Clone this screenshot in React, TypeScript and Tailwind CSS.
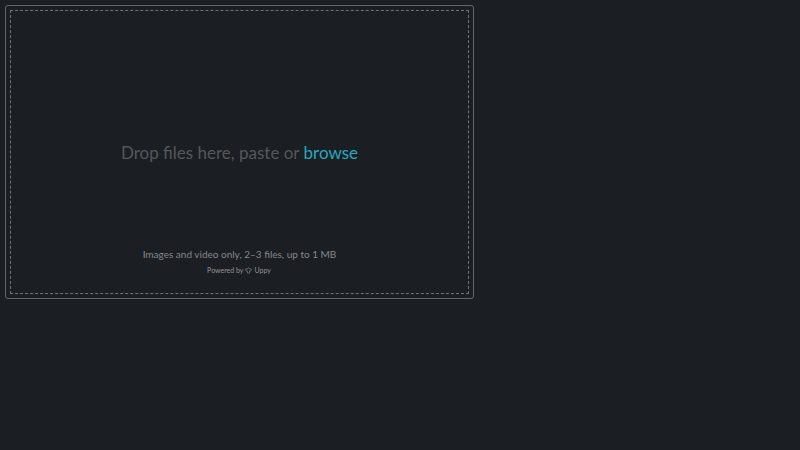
export default function App() {
  return (
    <div className="min-h-screen bg-[#1b1e23] pl-[5px] pt-[5px] font-['Lato',sans-serif]">
      <div className="h-[294px] w-[469px] rounded-[3px] border border-[#63666a] p-[4px]">
        <div className="flex h-full flex-col items-center border border-dashed border-[#6f7276]">
          <div className="flex flex-1 items-center pt-[48px]">
            <h1 className="text-[17px] leading-[26px] text-[#54575c]">
              Drop files here, paste or{" "}
              <span className="text-[#23aabd]">browse</span>
            </h1>
          </div>
          <p className="text-[10px] leading-[16px] text-[#85888c]">
            Images and video only, 2–3 files, up to 1 MB
          </p>
          <div className="mt-[1px] mb-[16px] flex items-center gap-[2px] pr-[1px] text-[7px] leading-[14px] text-[#92959a]">
            <span>Powered by</span>
            <svg
              width="7"
              height="7"
              viewBox="0 0 12 12"
              fill="none"
              stroke="currentColor"
              strokeWidth="1"
              strokeLinejoin="round"
            >
              <path d="M6 1 L7.8 3.2 L10.8 3.2 L10.2 6.6 L7.8 6.8 L7.8 10.5 L4.2 10.5 L4.2 6.8 L1.8 6.6 L1.2 3.2 L4.2 3.2 Z" />
            </svg>
            <span>Uppy</span>
          </div>
        </div>
      </div>
    </div>
  );
}
